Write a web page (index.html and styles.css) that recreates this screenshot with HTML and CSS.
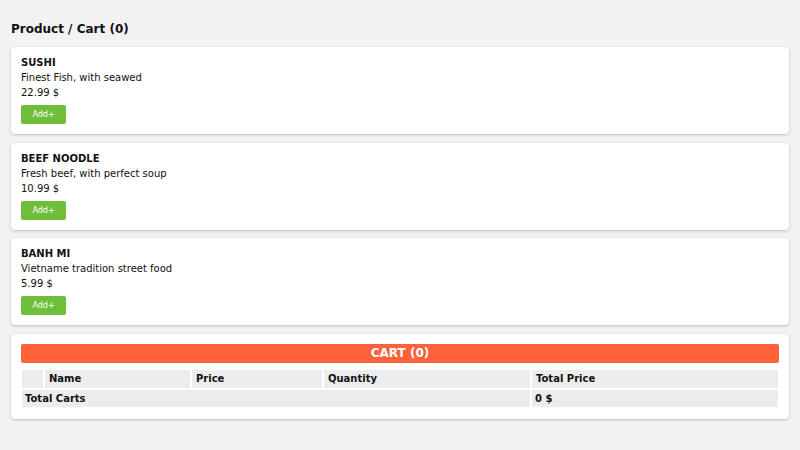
FILE: index.html
```html
<!DOCTYPE html>
<html>
<head>
<meta charset="utf-8">
<link rel="stylesheet" href="styles.css">
</head>
<body>
<div class="page">
  <h1 class="title">Product / Cart (0)</h1>
  <div class="card">
    <div class="name">SUSHI</div>
    <div class="line">Finest Fish, with seawed</div>
    <div class="line">22.99 $</div>
    <button class="add">Add+</button>
  </div>
  <div class="card">
    <div class="name">BEEF NOODLE</div>
    <div class="line">Fresh beef, with perfect soup</div>
    <div class="line">10.99 $</div>
    <button class="add">Add+</button>
  </div>
  <div class="card">
    <div class="name">BANH MI</div>
    <div class="line">Vietname tradition street food</div>
    <div class="line">5.99 $</div>
    <button class="add">Add+</button>
  </div>
  <div class="card cart">
    <div class="cart-head">CART (0)</div>
    <table class="cart-table">
      <thead>
        <tr><th class="c0"></th><th class="c1">Name</th><th class="c2">Price</th><th class="c3">Quantity</th><th class="c4">Total Price</th></tr>
      </thead>
      <tbody>
        <tr class="total"><th colspan="4">Total Carts</th><th>0 $</th></tr>
      </tbody>
    </table>
  </div>
</div>
</body>
</html>
```
FILE: styles.css
```css
html, body {
  margin: 0;
  padding: 0;
  background: #f2f2f2;
}
body {
  font-family: "DejaVu Sans", sans-serif;
  color: #111;
}
.page {
  padding: 21px 11px 11px;
  display: flex;
  flex-direction: column;
  gap: 8.5px;
}
.title {
  margin: 0 0 0.5px;
  font-size: 12px;
  line-height: 17px;
  font-weight: bold;
}
.card {
  background: #fff;
  border-radius: 4px;
  box-shadow: 0 1px 3px rgba(0,0,0,0.22);
  padding: 8px 10px 10px;
  display: flex;
  flex-direction: column;
  align-items: flex-start;
}
.name {
  font-size: 10px;
  font-weight: bold;
  line-height: 15px;
}
.line {
  font-size: 10px;
  line-height: 15px;
}
.add {
  margin-top: 5px;
  width: 45px;
  height: 19px;
  border: none;
  border-radius: 2px;
  background: #6fbe3a;
  color: #fff;
  font-family: "DejaVu Sans", sans-serif;
  font-size: 8px;
  padding: 0;
}
.cart {
  align-items: stretch;
  padding-top: 10px;
  padding-bottom: 10px;
}
.cart-head {
  background: #ff623b;
  color: #fff;
  font-weight: bold;
  font-size: 12px;
  line-height: 19px;
  text-align: center;
  border-radius: 2px;
}
.cart-table {
  margin: 5px -1px 0;
  border-collapse: separate;
  border-spacing: 2px 2px;
  font-size: 10px;
}
.cart-table th {
  background: #ececec;
  text-align: left;
  padding: 0 4px;
  height: 18px;
  font-weight: bold;
}
.cart-table .total th {
  height: 17px;
  padding-left: 3px;
}
.c0 { width: 13px; }
.c1 { width: 137px; }
.c2 { width: 122px; }
.c3 { width: 198px; }
```
